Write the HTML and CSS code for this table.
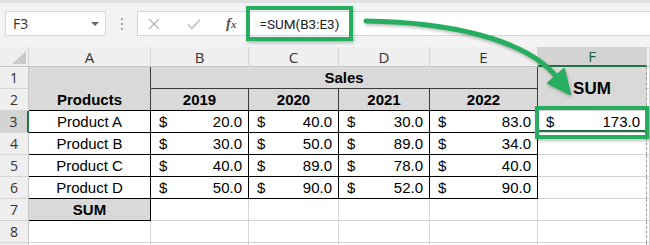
FILE: index.html
```html
<!DOCTYPE html>
<html lang="en">
<head>
    <meta charset="UTF-8">
    <title>SUM across a row</title>
    <link rel="stylesheet" href="styles.css">
</head>
<body>
    <div class="app">
        <div class="toolbar">
            <div class="namebox">
                <span>F3</span>
                <span class="caret"></span>
            </div>
            <div class="grip"><span></span><span></span><span></span></div>
            <div class="fbar">
                <div class="fbtns">
                    <svg class="btn" width="12" height="12" viewBox="0 0 12 12"><path d="M1 1 L11 11 M11 1 L1 11" /></svg>
                    <svg class="btn" width="14" height="12" viewBox="0 0 14 12"><path d="M1 6.5 L5 10.5 L13 1.5" /></svg>
                    <span class="fx">f<small>x</small></span>
                </div>
                <div class="finput"><span class="formula">=SUM(B3:E3)</span></div>
            </div>
        </div>

        <table class="sheet">
            <colgroup>
                <col style="width:29px">
                <col style="width:122px">
                <col style="width:98px">
                <col style="width:90px">
                <col style="width:91px">
                <col style="width:108px">
                <col style="width:109px">
                <col style="width:3px">
            </colgroup>
            <tr class="letters">
                <th class="corner"><svg width="14" height="13" viewBox="0 0 14 13"><polygon points="14,0 14,13 0,13" /></svg></th>
                <th>A</th><th>B</th><th>C</th><th>D</th><th>E</th><th class="sel">F</th><th></th>
            </tr>
            <tr>
                <th class="rowh">1</th>
                <td class="hdr a1"></td>
                <td class="hdr sales" colspan="4">Sales</td>
                <td class="hdr sumh colf" rowspan="2">SUM</td>
                <td></td>
            </tr>
            <tr>
                <th class="rowh">2</th>
                <td class="hdr yr">Products</td>
                <td class="hdr yr">2019</td>
                <td class="hdr yr">2020</td>
                <td class="hdr yr">2021</td>
                <td class="hdr yr">2022</td>
                <td></td>
            </tr>
            <tr>
                <th class="rowh sel">3</th>
                <td class="box name">Product A</td>
                <td class="box money"><span class="cur">$</span>20.0</td>
                <td class="box money"><span class="cur">$</span>40.0</td>
                <td class="box money"><span class="cur">$</span>30.0</td>
                <td class="box money"><span class="cur">$</span>83.0</td>
                <td class="colf money active"><span class="cur">$</span>173.0</td>
                <td></td>
            </tr>
            <tr>
                <th class="rowh">4</th>
                <td class="box name">Product B</td>
                <td class="box money"><span class="cur">$</span>30.0</td>
                <td class="box money"><span class="cur">$</span>50.0</td>
                <td class="box money"><span class="cur">$</span>89.0</td>
                <td class="box money"><span class="cur">$</span>34.0</td>
                <td class="colf"></td>
                <td></td>
            </tr>
            <tr>
                <th class="rowh">5</th>
                <td class="box name">Product C</td>
                <td class="box money"><span class="cur">$</span>40.0</td>
                <td class="box money"><span class="cur">$</span>89.0</td>
                <td class="box money"><span class="cur">$</span>78.0</td>
                <td class="box money"><span class="cur">$</span>40.0</td>
                <td class="colf"></td>
                <td></td>
            </tr>
            <tr>
                <th class="rowh">6</th>
                <td class="box name">Product D</td>
                <td class="box money"><span class="cur">$</span>50.0</td>
                <td class="box money"><span class="cur">$</span>90.0</td>
                <td class="box money"><span class="cur">$</span>52.0</td>
                <td class="box money"><span class="cur">$</span>90.0</td>
                <td class="colf"></td>
                <td></td>
            </tr>
            <tr>
                <th class="rowh">7</th>
                <td class="hdr box total">SUM</td>
                <td></td><td></td><td></td><td></td>
                <td class="colf"></td>
                <td></td>
            </tr>
            <tr>
                <th class="rowh">8</th>
                <td></td><td></td><td></td><td></td><td></td>
                <td class="colf"></td>
                <td></td>
            </tr>
            <tr>
                <th class="rowh"></th>
                <td></td><td></td><td></td><td></td><td></td>
                <td class="colf"></td>
                <td></td>
            </tr>
        </table>

        <!-- callouts drawn on top of the sheet -->
        <div class="mark mark-formula"></div>
        <div class="mark mark-cell"></div>
        <svg class="arrow" width="650" height="245" viewBox="0 0 650 245">
            <path d="M366 21 C 450 22 525 40 555 75" />
            <polygon points="564,69 548,83 570,94" />
        </svg>
    </div>
</body>
</html>
```

FILE: styles.css
```css
body {
    margin: 0;
    background: #f3f3f3;
    overflow: hidden;
}

.app {
    position: relative;
    width: 650px;
    height: 245px;
    overflow: hidden;
    font-family: "Open Sans", "Noto Sans", sans-serif;
}

/* formula bar */

.toolbar {
    height: 47px;
    box-sizing: border-box;
    padding: 11px 0 0 5px;
    display: flex;
    align-items: flex-start;
    background: linear-gradient(#e2e2e2 0, #e2e2e2 3px, #f3f3f3 3px);
}

.namebox {
    width: 101px;
    height: 25px;
    box-sizing: border-box;
    border: 1px solid #d6d6d6;
    background: #fff;
    display: flex;
    align-items: center;
    justify-content: space-between;
    padding: 0 6px 0 7px;
    font-size: 14px;
    color: #333;
}

.caret {
    width: 0;
    height: 0;
    border-left: 4px solid transparent;
    border-right: 4px solid transparent;
    border-top: 4px solid #666;
}

.grip {
    width: 31px;
    height: 25px;
    display: flex;
    flex-direction: column;
    align-items: center;
    justify-content: center;
    gap: 3px;
}

.grip span {
    width: 2px;
    height: 2px;
    background: #a8a8a8;
}

.fbar {
    flex: 1;
    height: 25px;
    box-sizing: border-box;
    border: 1px solid #d6d6d6;
    border-right: none;
    background: #fff;
    display: flex;
    align-items: center;
}

.fbtns {
    flex: none;
    width: 108px;
    box-sizing: border-box;
    display: flex;
    align-items: center;
    padding-left: 10px;
    gap: 27px;
}

.btn path {
    fill: none;
    stroke: #b9b9b9;
    stroke-width: 1.4;
}

.fx {
    font-family: "Liberation Serif", serif;
    font-style: italic;
    font-weight: bold;
    font-size: 15px;
    color: #555;
    margin-left: -2px;
}

.fx small {
    font-size: 11px;
}

.finput {
    flex: 1;
}

.formula {
    display: block;
    width: 107px;
    text-align: center;
    font-family: Roboto, "Liberation Sans", sans-serif;
    font-size: 13.5px;
    color: #222;
}

/* grid */

.sheet {
    border-collapse: separate;
    border-spacing: 0;
    table-layout: fixed;
    width: 650px;
    background: #fff;
    font-family: "Liberation Sans", Arial, sans-serif;
    font-size: 15px;
    color: #000;
}

.sheet td,
.sheet th {
    box-sizing: border-box;
    height: 22px;
    padding: 0 6px;
    border-right: 1px solid #d4d4d4;
    border-bottom: 1px solid #d4d4d4;
    white-space: nowrap;
    overflow: hidden;
    line-height: 20px;
}

.letters th {
    height: 20px;
    padding: 0;
    background: #efefef;
    border-right: 1px solid #d6d6d6;
    border-bottom: 1px solid #c6c6c6;
    font-family: "Open Sans", sans-serif;
    font-weight: normal;
    font-size: 15px;
    color: #333;
    line-height: 18px;
}

.letters th.sel {
    background: #d3d3d3;
    border-bottom: 2px solid #217346;
    color: #1d5f3a;
}

.corner {
    text-align: right;
    vertical-align: bottom;
}

.corner svg {
    display: block;
    margin: 0 2px 2px auto;
}

.corner polygon {
    fill: #c9c9c9;
}

.rowh {
    padding: 0 !important;
    background: #efefef;
    border-right-color: #c6c6c6 !important;
    font-family: "Open Sans", sans-serif;
    font-weight: normal;
    font-size: 14px;
    color: #333;
    text-align: center;
}

.rowh.sel {
    background: #d3d3d3;
    border-right: 2px solid #217346 !important;
}

.hdr {
    background: #d9d9d9;
    font-weight: bold;
    text-align: center;
}

.a1 {
    border-bottom-color: #d9d9d9 !important;
    border-right-color: #3a3a3a !important;
}

.sales {
    border-right-color: #3a3a3a !important;
    border-bottom-color: #3a3a3a !important;
}

.yr {
    border-right-color: #3a3a3a !important;
    border-bottom-color: #000 !important;
}

.sumh {
    font-size: 17px;
}

.box {
    border-right-color: #000 !important;
    border-bottom-color: #000 !important;
}

.name {
    text-align: center;
}

.money {
    text-align: right;
}

.cur {
    float: left;
    margin-left: 2px;
}

.colf {
    border-right: 1px dashed #9c9c9c !important;
}

.active {
    box-shadow: inset 0 -2px 0 #217346;
}

/* callouts */

.mark {
    position: absolute;
    box-sizing: border-box;
    border: 4px solid #27ad5f;
    box-shadow: 1px 2px 3px rgba(0, 0, 0, 0.25);
}

.mark-formula {
    left: 246px;
    top: 6px;
    width: 107px;
    height: 35px;
}

.mark-cell {
    left: 535px;
    top: 106px;
    width: 114px;
    height: 33px;
}

.arrow {
    position: absolute;
    left: 0;
    top: 0;
    filter: drop-shadow(1px 2px 1.5px rgba(0, 0, 0, 0.25));
}

.arrow path {
    fill: none;
    stroke: #27ad5f;
    stroke-width: 5;
    stroke-linecap: round;
}

.arrow polygon {
    fill: #27ad5f;
    stroke: #27ad5f;
    stroke-width: 2;
    stroke-linejoin: round;
}
```
